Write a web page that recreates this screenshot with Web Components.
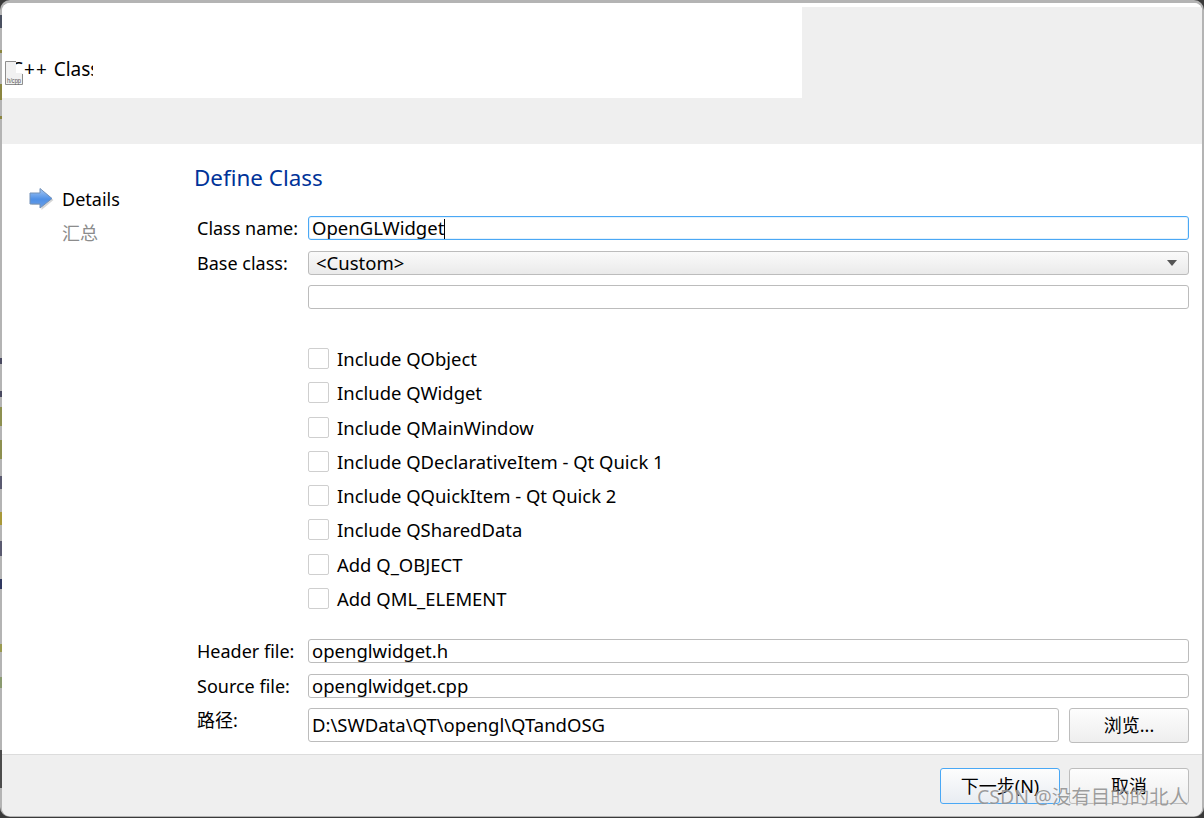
<!DOCTYPE html>
<html lang="zh">
<head>
<meta charset="utf-8">
<title>C++ Class</title>
<style>
  html, body { margin: 0; padding: 0; background: #3a3a3a; }
  body { width: 1204px; height: 818px; overflow: hidden; font-family: "Noto Sans", "Noto Sans CJK SC", sans-serif; color: #000; }
</style>
</head>
<body>
<wizard-dialog>
  <wizard-header slot="header" title-text="C++ Class"></wizard-header>
  <step-list slot="steps">
    <step-item active>Details</step-item>
    <step-item>汇总</step-item>
  </step-list>
  <class-form slot="page"></class-form>
  <push-button slot="footer" focused>下一步(N)</push-button>
  <push-button slot="footer">取消</push-button>
</wizard-dialog>
<water-mark>CSDN @没有目的的北人</water-mark>

<script>
class wizardDialog extends HTMLElement {
  constructor() {
    super();
    this.shadowDOM = this.attachShadow({ mode: 'open' });
    this.shadowDOM.innerHTML = `
    <style>
    :host {
        display: block;
        position: relative;
        width: 1204px;
        height: 817px;
        box-sizing: border-box;
        padding: 3px 2px 1px 2px;
        background: #b4b4b4;
        border-radius: 10px;
        overflow: hidden;
    }
    .specks {
        position: absolute;
        left: 0;
        top: 0;
        width: 2px;
        height: 817px;
        background: linear-gradient(to bottom,
          transparent 15px, #4a5060 15px, #4a5060 28px, transparent 28px,
          transparent 50px, #8a8540 50px, #8a8540 53px, transparent 53px,
          transparent 84px, #8a8540 84px, #8a8540 100px, transparent 100px,
          transparent 116px, #8a8540 116px, #8a8540 119px, transparent 119px,
          transparent 358px, #4a4a60 358px, #4a4a60 364px, transparent 364px,
          transparent 391px, #4a4a60 391px, #4a4a60 397px, transparent 397px,
          transparent 407px, #8d9050 407px, #8d9050 426px, transparent 426px,
          transparent 440px, #8d9050 440px, #8d9050 459px, transparent 459px,
          transparent 476px, #5a5a70 476px, #5a5a70 489px, transparent 489px,
          transparent 512px, #a89838 512px, #a89838 525px, transparent 525px,
          transparent 541px, #5a5a70 541px, #5a5a70 556px, transparent 556px,
          transparent 579px, #303860 579px, #303860 589px, transparent 589px,
          transparent 644px, #9a9a50 644px, #9a9a50 652px, transparent 652px,
          transparent 677px, #8a9a70 677px, #8a9a70 688px, transparent 688px,
          transparent 750px, #4c4c4c 750px, #4c4c4c 788px, transparent 788px);
    }
    .inner {
        position: relative;
        height: 100%;
        display: flex;
        flex-direction: column;
        background: #fff;
        border-radius: 8px;
        overflow: hidden;
    }
    .body {
        flex: 1;
        display: flex;
        min-height: 0;
    }
    .side {
        width: 193px;
        flex: none;
    }
    .page {
        flex: 1;
        min-width: 0;
    }
    .footer {
        flex: none;
        height: 62px;
        box-sizing: border-box;
        border-top: 1px solid #dcdcdc;
        background: #efefef;
        display: flex;
        justify-content: flex-end;
        gap: 9px;
        padding: 13px 13px 0 0;
    }
    </style>
    <div class="specks"></div>
    <div class="inner">
      <slot name="header"></slot>
      <div class="body">
        <div class="side"><slot name="steps"></slot></div>
        <div class="page"><slot name="page"></slot></div>
      </div>
      <div class="footer"><slot name="footer"></slot></div>
    </div>`;
  }
}

class wizardHeader extends HTMLElement {
  constructor() {
    super();
    this.shadowDOM = this.attachShadow({ mode: 'open' });
  }

  connectedCallback() {
    this.render();
  }

  render() {
    const [lang, word] = this.getAttribute('title-text').split(' ');
    this.shadowDOM.innerHTML = `
    <style>
    :host {
        display: block;
        flex: none;
        height: 141px;
        background: #fff;
    }
    .top {
        position: relative;
        height: 95px;
        display: flex;
    }
    .banner {
        width: 800px;
        flex: none;
        box-sizing: border-box;
        padding: 50px 0 0 9px;
    }
    .clip {
        width: 82px;
        overflow: hidden;
        white-space: pre;
        font-size: 19px;
        line-height: 32px;
    }
    .clip span {
        letter-spacing: 1px;
    }
    .logo {
        flex: 1;
        margin-top: 4px;
        background: #efefef;
    }
    svg {
        position: absolute;
        left: 3px;
        top: 58px;
    }
    .band {
        height: 46px;
        background: #efefef;
    }
    </style>
    <div class="top">
      <div class="banner"><div class="clip"><span>${lang} </span>${word}</div></div>
      <div class="logo"></div>
      <svg width="18" height="24" viewBox="0 0 18 24">
        <path d="M.5.5H11V12H17.5V23.5H.5Z" fill="#f1f1f1" stroke="none"/>
        <path d="M11 .5H.5V23.5H17.5V13" fill="none" stroke="#8e8e8e"/>
        <text x="2" y="21.500" font-family="Liberation Sans" font-size="7.500" textLength="14" lengthAdjust="spacingAndGlyphs" fill="#555">h/cpp</text>
      </svg>
    </div>
    <div class="band"></div>`;
  }
}

class stepList extends HTMLElement {
  constructor() {
    super();
    this.shadowDOM = this.attachShadow({ mode: 'open' });
    this.shadowDOM.innerHTML = `
    <style>
    :host {
        display: flex;
        flex-direction: column;
        gap: 7px;
        padding: 42px 0 0 27px;
    }
    </style>
    <slot></slot>`;
  }
}

class stepItem extends HTMLElement {
  constructor() {
    super();
    this.shadowDOM = this.attachShadow({ mode: 'open' });
    this.shadowDOM.innerHTML = `
    <style>
    :host {
        display: flex;
        align-items: center;
        height: 26px;
        font-size: 18px;
        color: #8c8c8c;
        padding-left: 33px;
        position: relative;
    }
    :host([active]) {
        color: #000;
    }
    svg {
        display: none;
        position: absolute;
        left: 0;
        top: 1px;
    }
    :host([active]) svg {
        display: block;
    }
    </style>
    <svg width="25" height="24" viewBox="0 0 25 24">
      <defs>
        <linearGradient id="fill" x1="0" y1="0" x2="0" y2="1">
          <stop offset="0" stop-color="#a6c8f4"/>
          <stop offset=".55" stop-color="#4f90e6"/>
          <stop offset="1" stop-color="#6a9fe6"/>
        </linearGradient>
      </defs>
      <path d="M2 7H12V2L24 12 12 22V17H2Z" fill="#000" opacity=".16" transform="translate(.5 1)"/>
      <path d="M1 6H11V1.500L23 11.500 11 21V17H1Z" fill="url(#fill)" stroke="#7391b8"/>
    </svg>
    <slot></slot>`;
  }
}

class textField extends HTMLElement {
  constructor() {
    super();
    this.shadowDOM = this.attachShadow({ mode: 'open' });
  }

  connectedCallback() {
    this.render();
  }

  render() {
    this.shadowDOM.innerHTML = `
    <style>
    :host {
        display: block;
        box-sizing: border-box;
        height: 24px;
        border: 1.5px solid #bcbcbc;
        border-radius: 3px;
        background: #fff;
        padding: 0 3px;
        font-size: 18.5px;
        line-height: 21px;
        white-space: nowrap;
    }
    :host([focused]) {
        border: 1.5px solid #4aa8f5;
        box-shadow: inset 0 0 0 1px #e4f2fd;
    }
    .caret {
        display: inline-block;
        width: 1px;
        height: 20px;
        background: #000;
        vertical-align: -4px;
    }
    </style>
    <span class="value"></span>${this.hasAttribute('focused') ? '<span class="caret"></span>' : ''}`;
    this.shadowDOM.querySelector('.value').textContent = this.getAttribute('value') || '';
  }
}

class comboBox extends HTMLElement {
  constructor() {
    super();
    this.shadowDOM = this.attachShadow({ mode: 'open' });
  }

  connectedCallback() {
    this.render();
  }

  render() {
    this.shadowDOM.innerHTML = `
    <style>
    :host {
        display: flex;
        align-items: center;
        justify-content: space-between;
        box-sizing: border-box;
        height: 24px;
        border: 1.5px solid #bcbcbc;
        border-radius: 3px;
        background: linear-gradient(to bottom, #fafafa, #eaeaea);
        padding: 0 11px 0 7px;
        font-size: 18.5px;
        line-height: 20px;
    }
    .arrow {
        width: 0;
        height: 0;
        border-left: 5.5px solid transparent;
        border-right: 5.5px solid transparent;
        border-top: 6px solid #555;
    }
    </style>
    <span class="value"></span>
    <span class="arrow"></span>`;
    this.shadowDOM.querySelector('.value').textContent = this.getAttribute('value');
  }
}

class checkRow extends HTMLElement {
  constructor() {
    super();
    this.shadowDOM = this.attachShadow({ mode: 'open' });
    this.shadowDOM.innerHTML = `
    <style>
    :host {
        display: flex;
        align-items: center;
        gap: 8px;
        height: 21px;
        font-size: 18.45px;
        white-space: nowrap;
    }
    .box {
        box-sizing: border-box;
        width: 21px;
        height: 21px;
        flex: none;
        border: 1.5px solid #cfcfcf;
        border-radius: 2px;
        background: #fff;
    }
    </style>
    <span class="box"></span>
    <slot></slot>`;
  }
}

class pushButton extends HTMLElement {
  constructor() {
    super();
    this.shadowDOM = this.attachShadow({ mode: 'open' });
    this.shadowDOM.innerHTML = `
    <style>
    :host {
        display: flex;
        align-items: center;
        justify-content: center;
        box-sizing: border-box;
        width: 120px;
        height: 36px;
        border: 1.5px solid #bdbdbd;
        border-radius: 3px;
        background: linear-gradient(to bottom, #fdfdfd, #eeeeee);
        font-size: 18px;
        white-space: nowrap;
        padding-bottom: 2px;
    }
    :host([focused]) {
        border-color: #4aa8f5;
        background: linear-gradient(to bottom, #fdfdfd, #e8ecf2);
    }
    </style>
    <slot></slot>`;
  }
}

class classForm extends HTMLElement {
  constructor() {
    super();
    this.shadowDOM = this.attachShadow({ mode: 'open' });
    this.shadowDOM.innerHTML = `
    <style>
    :host {
        display: block;
        padding: 17px 13px 0 0;
        font-size: 18px;
    }
    h1 {
        margin: 0 0 22px -1px;
        font-size: 22.4px;
        line-height: 33px;
        font-weight: 400;
        color: #003399;
    }
    .grid {
        display: grid;
        grid-template-columns: 111px 1fr;
        padding-left: 2px;
        align-items: center;
    }
    .grid > span { line-height: 20px; }
    .checks {
        grid-column: 2;
        display: flex;
        flex-direction: column;
        gap: 13.29px;
        margin: 39px 0 30px 0;
    }
    .gap { margin-top: 10px; }
    .gap11 { margin-top: 11px; }
    .path {
        display: flex;
        gap: 10px;
    }
    .path text-field {
        flex: 1;
        height: 34px;
        line-height: 31px;
    }
    .path push-button {
        height: 35px;
    }
    .grid > .lift { align-self: start; line-height: 24px; }
    </style>
    <h1>Define Class</h1>
    <div class="grid">
      <span>Class name:</span>
      <text-field focused value="OpenGLWidget"></text-field>
      <span class="gap11">Base class:</span>
      <combo-box class="gap11" value="&lt;Custom&gt;"></combo-box>
      <span></span>
      <text-field class="gap" value=""></text-field>
      <div class="checks">
        <check-row>Include QObject</check-row>
        <check-row>Include QWidget</check-row>
        <check-row>Include QMainWindow</check-row>
        <check-row>Include QDeclarativeItem - Qt Quick 1</check-row>
        <check-row>Include QQuickItem - Qt Quick 2</check-row>
        <check-row>Include QSharedData</check-row>
        <check-row>Add Q_OBJECT</check-row>
        <check-row>Add QML_ELEMENT</check-row>
      </div>
      <span>Header file:</span>
      <text-field value="openglwidget.h"></text-field>
      <span class="gap11">Source file:</span>
      <text-field class="gap11" value="openglwidget.cpp"></text-field>
      <span class="gap lift">路径:</span>
      <div class="gap path">
        <text-field value="D:\\SWData\\QT\\opengl\\QTandOSG"></text-field>
        <push-button>浏览...</push-button>
      </div>
    </div>`;
  }
}

class waterMark extends HTMLElement {
  constructor() {
    super();
    this.shadowDOM = this.attachShadow({ mode: 'open' });
    this.shadowDOM.innerHTML = `
    <style>
    :host {
        position: absolute;
        left: 977px;
        top: 783px;
        font-size: 19.5px;
        line-height: 28px;
        white-space: nowrap;
        color: rgba(120, 120, 120, .72);
        text-shadow: 0 0 1px rgba(255, 255, 255, .8);
    }
    </style>
    <slot></slot>`;
  }
}

customElements.define('wizard-dialog', wizardDialog);
customElements.define('wizard-header', wizardHeader);
customElements.define('step-list', stepList);
customElements.define('step-item', stepItem);
customElements.define('text-field', textField);
customElements.define('combo-box', comboBox);
customElements.define('check-row', checkRow);
customElements.define('push-button', pushButton);
customElements.define('class-form', classForm);
customElements.define('water-mark', waterMark);
</script>
</body>
</html>
